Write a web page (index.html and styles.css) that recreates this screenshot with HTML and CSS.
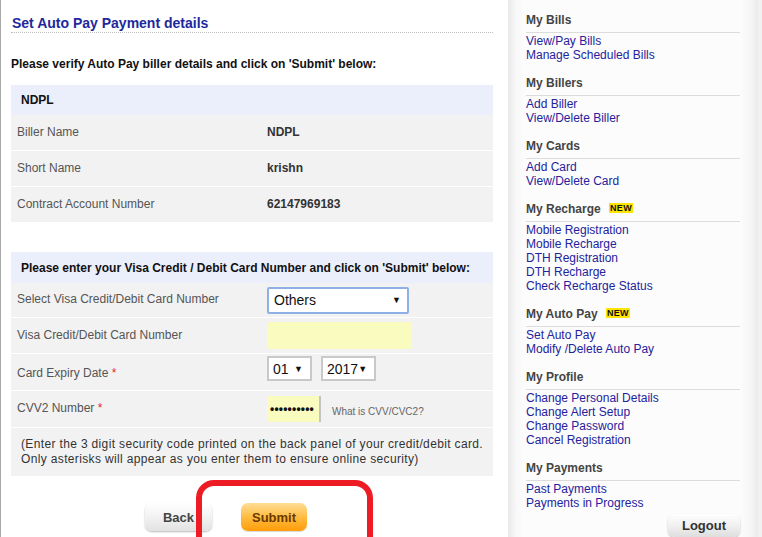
FILE: index.html
```html
<!DOCTYPE html>
<html lang="en">
<head>
<meta charset="utf-8">
<title>Set Auto Pay Payment details</title>
<link rel="stylesheet" href="styles.css">
</head>
<body>
<div class="page">
  <main class="main">
    <h1 class="title">Set Auto Pay Payment details</h1>
    <p class="intro">Please verify Auto Pay biller details and click on 'Submit' below:</p>

    <section class="panel">
      <div class="panel-head panel-head-biller">NDPL</div>
      <div class="row"><span class="label">Biller Name</span><span class="value">NDPL</span></div>
      <div class="row"><span class="label">Short Name</span><span class="value">krishn</span></div>
      <div class="row"><span class="label">Contract Account Number</span><span class="value">62147969183</span></div>
    </section>

    <section class="panel panel-form">
      <div class="panel-head panel-head-form">Please enter your Visa Credit / Debit Card Number and click on 'Submit' below:</div>
      <div class="row row-short">
        <span class="label">Select Visa Credit/Debit Card Number</span>
        <span class="field"><span class="select select-card"><span>Others</span><span class="arrow">▼</span></span></span>
      </div>
      <div class="row">
        <span class="label">Visa Credit/Debit Card Number</span>
        <span class="field"><span class="input input-card"></span></span>
      </div>
      <div class="row row-tall">
        <span class="label label-low">Card Expiry Date <span class="req">*</span></span>
        <span class="field field-top">
          <span class="select select-month"><span>01</span><span class="arrow">▼</span></span>
          <span class="select select-year"><span>2017</span><span class="arrow">▼</span></span>
        </span>
      </div>
      <div class="row row-tall">
        <span class="label">CVV2 Number <span class="req">*</span></span>
        <span class="field">
          <span class="input input-cvv">••••••••••</span>
          <span class="help">What is CVV/CVC2?</span>
        </span>
      </div>
      <div class="note">(Enter the 3 digit security code printed on the back panel of your credit/debit card. Only asterisks will appear as you enter them to ensure online security)</div>
    </section>

    <div class="actions">
      <button class="btn btn-back" type="button">Back</button>
      <button class="btn btn-submit" type="button">Submit</button>
    </div>
    <div class="annotation"></div>
  </main>

  <aside class="sidebar">
    <div class="group">
      <h2 class="group-title">My Bills</h2>
      <a class="link" href="#">View/Pay Bills</a>
      <a class="link" href="#">Manage Scheduled Bills</a>
    </div>
    <div class="group">
      <h2 class="group-title">My Billers</h2>
      <a class="link" href="#">Add Biller</a>
      <a class="link" href="#">View/Delete Biller</a>
    </div>
    <div class="group">
      <h2 class="group-title">My Cards</h2>
      <a class="link" href="#">Add Card</a>
      <a class="link" href="#">View/Delete Card</a>
    </div>
    <div class="group">
      <h2 class="group-title">My Recharge <span class="badge">NEW</span></h2>
      <a class="link" href="#">Mobile Registration</a>
      <a class="link" href="#">Mobile Recharge</a>
      <a class="link" href="#">DTH Registration</a>
      <a class="link" href="#">DTH Recharge</a>
      <a class="link" href="#">Check Recharge Status</a>
    </div>
    <div class="group">
      <h2 class="group-title">My Auto Pay <span class="badge">NEW</span></h2>
      <a class="link" href="#">Set Auto Pay</a>
      <a class="link" href="#">Modify /Delete Auto Pay</a>
    </div>
    <div class="group">
      <h2 class="group-title">My Profile</h2>
      <a class="link" href="#">Change Personal Details</a>
      <a class="link" href="#">Change Alert Setup</a>
      <a class="link" href="#">Change Password</a>
      <a class="link" href="#">Cancel Registration</a>
    </div>
    <div class="group group-last">
      <h2 class="group-title">My Payments</h2>
      <a class="link" href="#">Past Payments</a>
      <a class="link" href="#">Payments in Progress</a>
    </div>
    <button class="btn btn-logout" type="button">Logout</button>
  </aside>
</div>
</body>
</html>
```

FILE: styles.css
```css
html, body {
  margin: 0;
  padding: 0;
  height: 537px;
  overflow: hidden;
}

body {
  background: #f1f1f1;
  font-family: "Liberation Sans", Arial, sans-serif;
  font-size: 12px;
  color: #333;
}

.page {
  display: flex;
  width: 762px;
  height: 537px;
}

/* ---------- main column ---------- */
.main {
  position: relative;
  width: 508px;
  flex: none;
  box-sizing: border-box;
  background: #fff;
  border-left: 1px solid #a9a9a9;
  padding: 0 15px 0 10px;
}

.title {
  margin: 0;
  padding: 15px 0 1px 1px;
  font-size: 14px;
  line-height: 16px;
  font-weight: bold;
  color: #1e289c;
  border-bottom: 1px dotted #bdbdbd;
}

.intro {
  margin: 24px 0 14px;
  font-size: 12px;
  line-height: 14px;
  font-weight: bold;
  color: #111;
}

.panel {
  background: #f2f2f2;
}

.panel-form {
  margin-top: 30px;
}

.panel-head {
  display: flex;
  align-items: center;
  padding-left: 10px;
  background: #ebeefb;
  font-weight: bold;
  color: #111;
}

.panel-head-biller { height: 30px; }
.panel-head-form { height: 31px; }

.row {
  display: grid;
  grid-template-columns: 250px 1fr;
  align-items: center;
  height: 35px;
  padding-left: 6px;
}

.row + .row,
.row + .note {
  border-top: 1px solid #fff;
}

.row-short { height: 34px; }
.row-tall { height: 36px; }

.label {
  color: #555;
  margin-top: -2px;
}

.label-low {
  margin-top: 1px;
}

.value {
  font-weight: bold;
  color: #333;
  margin-top: -2px;
}

.req { color: #e8262b; }

.field {
  display: flex;
  align-items: center;
}

.field-top {
  align-self: start;
  margin-top: 2px;
}

.select {
  display: flex;
  align-items: center;
  justify-content: space-between;
  box-sizing: border-box;
  background: #fff;
  color: #111;
  font-size: 14px;
}

.arrow {
  font-size: 9px;
  color: #111;
}

.select-card {
  width: 142px;
  height: 27px;
  padding: 0 6px 0 5px;
  border: 2px solid #8fb0e6;
  border-radius: 2px;
}

.select-month,
.select-year {
  height: 25px;
  border: 2px solid #c9c9c9;
  padding: 0 7px 0 4px;
}

.select-month { width: 45px; }
.select-year { width: 55px; margin-left: 9px; }

.input {
  display: flex;
  align-items: center;
  box-sizing: border-box;
  background: #fafcbf;
}

.input-card {
  width: 145px;
  height: 27px;
}

.input-cvv {
  width: 54px;
  height: 26px;
  padding-left: 3px;
  border-right: 2px solid #c4c4c4;
  font-size: 12px;
  font-weight: bold;
  color: #111;
  letter-spacing: 0.2px;
}

.help {
  margin-left: 11px;
  margin-top: 5px;
  font-size: 10px;
  color: #666;
}

.note {
  padding: 9px 10px;
  font-size: 12px;
  line-height: 15px;
  text-align: justify;
  letter-spacing: 0.35px;
  color: #333;
}

.actions {
  display: flex;
  gap: 29px;
  margin-top: 27px;
  padding-left: 134px;
}

.btn {
  height: 28px;
  border: none;
  border-radius: 7px;
  font-family: "Liberation Sans", Arial, sans-serif;
  font-size: 13px;
  font-weight: bold;
  cursor: pointer;
}

.btn-back {
  width: 67px;
  background: linear-gradient(#ffffff, #f2f2f2 50%, #e2e2e2);
  box-shadow: 0 1px 2px rgba(0, 0, 0, 0.28);
  color: #444;
}

.btn-submit {
  width: 66px;
  background: linear-gradient(#ffdd95, #ffb93a 55%, #ff9c0a);
  box-shadow: 0 1px 1px rgba(0, 0, 0, 0.15);
  color: #6a3a00;
}

.annotation {
  position: absolute;
  left: 195px;
  top: 480px;
  width: 177px;
  height: 80px;
  box-sizing: border-box;
  border: 6px solid #ed1c24;
  border-radius: 18px;
  pointer-events: none;
}

/* ---------- sidebar ---------- */
.sidebar {
  width: 250px;
  flex: none;
  box-sizing: border-box;
  padding: 13px 18px 0;
  background: linear-gradient(to right, #e9e9e9 0, #f8f8f8 8px, #fcfcfc 16px, #fcfcfc 232px, #f6f6f6 242px, #ebebeb 250px);
  display: flex;
  flex-direction: column;
}

.group {
  margin-bottom: 14px;
}

.group-last {
  margin-bottom: 0;
}

.group-title {
  margin: 0 0 1px;
  padding-bottom: 5px;
  border-bottom: 1px solid #dcdcdc;
  font-size: 12px;
  line-height: 14px;
  font-weight: bold;
  color: #444;
}

.badge {
  display: inline-block;
  margin-left: 5px;
  padding: 0 1px;
  background: #ffe400;
  color: #111;
  font-size: 9px;
  line-height: 10px;
  font-weight: bold;
  vertical-align: 2px;
  letter-spacing: 0.3px;
}

.link {
  display: block;
  font-size: 12px;
  line-height: 14px;
  color: #24229c;
  text-decoration: none;
}

.btn-logout {
  align-self: flex-end;
  width: 72px;
  height: 28px;
  margin-top: 4px;
  background: linear-gradient(#ffffff, #f0f0f0 50%, #dedede);
  box-shadow: 0 1px 2px rgba(0, 0, 0, 0.25);
  color: #333;
}
```
